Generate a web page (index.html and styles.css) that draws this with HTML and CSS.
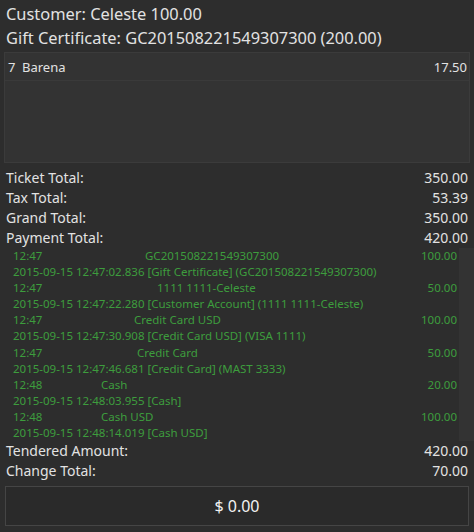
FILE: index.html
```html
<!DOCTYPE html>
<html>
<head>
<meta charset="utf-8">
<link rel="stylesheet" href="styles.css">
</head>
<body>
<div class="screen">
  <div class="header">
    <div class="hline">Customer: Celeste 100.00</div>
    <div class="hline">Gift Certificate: GC201508221549307300 (200.00)</div>
  </div>
  <div class="items">
    <div class="item">
      <span class="qty">7</span><span class="name">Barena</span><span class="price">17.50</span>
    </div>
  </div>
  <div class="totals">
    <div class="trow"><span>Ticket Total:</span><span>350.00</span></div>
    <div class="trow"><span>Tax Total:</span><span>53.39</span></div>
    <div class="trow"><span>Grand Total:</span><span>350.00</span></div>
    <div class="trow"><span>Payment Total:</span><span>420.00</span></div>
  </div>
  <div class="payments">
    <div class="plist">
      <div class="prow"><span class="time">12:47</span><span class="desc d1">GC201508221549307300</span><span class="amt">100.00</span></div>
      <div class="pnote">2015-09-15 12:47:02.836 [Gift Certificate] (GC201508221549307300)</div>
      <div class="prow"><span class="time">12:47</span><span class="desc d2">1111 1111-Celeste</span><span class="amt">50.00</span></div>
      <div class="pnote">2015-09-15 12:47:22.280 [Customer Account] (1111 1111-Celeste)</div>
      <div class="prow"><span class="time">12:47</span><span class="desc d3">Credit Card USD</span><span class="amt">100.00</span></div>
      <div class="pnote">2015-09-15 12:47:30.908 [Credit Card USD] (VISA 1111)</div>
      <div class="prow"><span class="time">12:47</span><span class="desc d4">Credit Card</span><span class="amt">50.00</span></div>
      <div class="pnote">2015-09-15 12:47:46.681 [Credit Card] (MAST 3333)</div>
      <div class="prow"><span class="time">12:48</span><span class="desc d5">Cash</span><span class="amt">20.00</span></div>
      <div class="pnote">2015-09-15 12:48:03.955 [Cash]</div>
      <div class="prow"><span class="time">12:48</span><span class="desc d5">Cash USD</span><span class="amt">100.00</span></div>
      <div class="pnote">2015-09-15 12:48:14.019 [Cash USD]</div>
    </div>
    <div class="scrolltrack"></div>
  </div>
  <div class="totals after">
    <div class="trow"><span>Tendered Amount:</span><span>420.00</span></div>
    <div class="trow"><span>Change Total:</span><span>70.00</span></div>
  </div>
  <div class="amountbox">$ 0.00</div>
</div>
</body>
</html>
```
FILE: styles.css
```css
html, body {
  margin: 0;
  padding: 0;
  background: #2d2d2d;
}
body {
  font-family: "Noto Sans", "Open Sans", sans-serif;
  color: #e2e2e2;
  width: 474px;
  height: 532px;
  overflow: hidden;
}
.screen {
  display: flex;
  flex-direction: column;
}
.header {
  padding: 2px 6px 0 6px;
  height: 49px;
}
.hline {
  font-size: 16.4px;
  line-height: 24px;
  white-space: nowrap;
}
.items {
  margin: 1px 4px 0 4px;
  height: 109px;
  background: #333333;
  border: 1px solid #3b3b3b;
}
.item {
  display: flex;
  align-items: center;
  height: 27px;
  padding: 0 2px 0 3px;
  font-size: 13px;
  border-bottom: 1px solid #3a3a3a;
}
.qty { width: 14px; }
.name { flex: 1; }
.price { text-align: right; }
.totals {
  padding: 5px 6px 0 6px;
}
.trow {
  display: flex;
  justify-content: space-between;
  font-size: 14px;
  line-height: 20px;
}
.payments {
  display: flex;
  height: 193px;
}
.plist {
  flex: 1;
  padding: 0 0 0 13px;
  color: #3d9d3d;
  font-size: 11.5px;
}
.scrolltrack {
  width: 15px;
  background: #333333;
}
.prow {
  display: flex;
  height: 16.1px;
  line-height: 16px;
}
.pnote {
  height: 16.1px;
  line-height: 16px;
  white-space: nowrap;
}
.time { width: 88px; }
.desc { flex: 1; }
.d1 { padding-left: 44px; }
.d2 { padding-left: 56px; }
.d3 { padding-left: 33px; }
.d4 { padding-left: 36px; }
.d5 { padding-left: 0; }
.amt { width: 60px; text-align: right; padding-right: 2px; }
.after {
  padding-top: 0;
}
.amountbox {
  margin: 5px 5px 0 5px;
  height: 38px;
  border: 1px solid #454545;
  background: #2a2a2a;
  display: flex;
  align-items: center;
  justify-content: center;
  font-size: 16px;
  color: #f2f2f2;
}
```
